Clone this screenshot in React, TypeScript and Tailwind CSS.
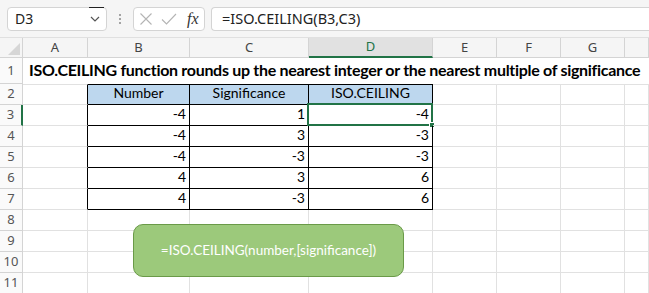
import React from 'react';

const COLS = [
  { key: 'A', w: 65 },
  { key: 'B', w: 102 },
  { key: 'C', w: 119 },
  { key: 'D', w: 124 },
  { key: 'E', w: 64 },
  { key: 'F', w: 64 },
  { key: 'G', w: 64 },
  { key: '', w: 24 },
];

const DATA: [string, string, string][] = [
  ['-4', '1', '-4'],
  ['-4', '3', '-3'],
  ['-4', '-3', '-3'],
  ['4', '3', '6'],
  ['4', '-3', '6'],
];

const cellFont = { fontFamily: 'Lato, "Open Sans", sans-serif' };
const uiFont = { fontFamily: '"Noto Sans", "Open Sans", sans-serif' };

function Toolbar() {
  return (
    <div className="flex h-[38px] items-center gap-[6px] bg-[#f5f5f5] pl-[7px] border-b border-[#e0e0e0]" style={uiFont}>
      {/* name box */}
      <div className="relative flex h-[24px] w-[100px] items-center justify-between rounded-[4px] border border-[#d4d4d4] bg-white pl-[7px] pr-[5px]">
        <span className="text-[14px] text-[#222]">D3</span>
        <svg width="12" height="8" viewBox="0 0 12 8">
          <path d="M2 2 L6 6 L10 2" fill="none" stroke="#555" strokeWidth="1.2" />
        </svg>
        <div className="absolute -top-[1px] right-[2px] h-[1px] w-[15px] bg-[#222]" />
      </div>
      {/* dots */}
      <div className="flex w-[14px] flex-col items-center gap-[2px]">
        <div className="h-[2px] w-[2px] rounded-full bg-[#888]" />
        <div className="h-[2px] w-[2px] rounded-full bg-[#888]" />
        <div className="h-[2px] w-[2px] rounded-full bg-[#888]" />
      </div>
      {/* function icons */}
      <div className="flex h-[24px] w-[72px] items-center rounded-[4px] border border-[#d4d4d4] bg-white pl-[5px]">
        <svg width="14" height="14" viewBox="0 0 14 14">
          <path d="M1.5 1.5 L12.5 12.5 M12.5 1.5 L1.5 12.5" stroke="#b4b4b4" strokeWidth="1.1" />
        </svg>
        <svg width="16" height="14" viewBox="0 0 16 14" className="ml-[8px]">
          <path d="M1 7.5 L5.5 12 L15 2" fill="none" stroke="#b4b4b4" strokeWidth="1.1" />
        </svg>
        <span className="ml-[10px] text-[16px] italic text-[#333]" style={{ fontFamily: '"Liberation Serif", serif' }}>
          fx
        </span>
      </div>
      {/* formula input */}
      <div className="flex h-[24px] flex-1 items-center rounded-l-[4px] border border-r-0 border-[#d4d4d4] bg-white pl-[10px]">
        <span className="text-[14.5px] text-[#222]">=ISO.CEILING(B3,C3)</span>
      </div>
    </div>
  );
}

function ColumnHeader() {
  return (
    <div className="flex h-[20px] bg-[#f5f5f5]" style={uiFont}>
      <div className="relative w-[23px] shrink-0 border-r border-b border-[#d4d4d4]">
        <svg width="14" height="14" viewBox="0 0 14 14" className="absolute left-[7px] top-[4px]">
          <path d="M13 1 L13 13 L1 13 Z" fill="#d6d6d6" />
        </svg>
      </div>
      {COLS.map((c) => {
        const sel = c.key === 'D';
        return (
          <div
            key={c.key + c.w}
            className={
              sel
                ? 'flex shrink-0 items-center justify-center border-r border-b-2 border-r-[#d4d4d4] border-b-[#217346] bg-[#e1e1e1] text-[13px] text-[#217346]'
                : 'flex shrink-0 items-center justify-center border-r border-b border-[#d4d4d4] text-[13px] text-[#444]'
            }
            style={{ width: c.w }}
          >
            {c.key}
          </div>
        );
      })}
    </div>
  );
}

function RowHead({ n, h }: { n: number; h: number }) {
  const sel = n === 3;
  return (
    <div
      className={
        sel
          ? 'flex w-[23px] shrink-0 items-center justify-center border-r-2 border-b border-r-[#217346] border-b-[#e1e1e1] bg-[#fafafa] text-[13px] text-[#555]'
          : 'flex w-[23px] shrink-0 items-center justify-center border-r border-b border-[#d4d4d4] bg-[#fafafa] text-[13px] text-[#555]'
      }
      style={{ height: h, ...uiFont }}
    >
      {n}
    </div>
  );
}

function Cell({
  w,
  cls,
  children,
  align = 'right',
}: {
  w: number;
  cls: string;
  children?: React.ReactNode;
  align?: 'right' | 'center';
}) {
  return (
    <div
      className={
        (align === 'center' ? 'justify-center ' : 'justify-end pr-[3px] ') +
        'relative flex h-[21px] shrink-0 items-end pb-[1px] text-[14px] text-black ' +
        cls
      }
      style={{ width: w, ...cellFont }}
    >
      {children}
    </div>
  );
}

const GRID = 'border-r border-b border-[#e1e1e1]';
const TBL = 'border-r border-b border-black';
const A_EDGE = 'border-r border-b border-r-black border-b-[#e1e1e1]';

export default function App() {
  return (
    <div className="relative h-[293px] w-[649px] overflow-hidden bg-white">
      <Toolbar />
      <ColumnHeader />

      {/* row 1 */}
      <div className="flex">
        <RowHead n={1} h={26} />
        <div
          className="flex h-[26px] flex-1 items-end whitespace-nowrap pb-[2px] pl-[6px] text-[16px] font-bold text-black"
          style={{ ...cellFont, letterSpacing: '-0.3px' }}
        >
          ISO.CEILING function rounds up the nearest integer or the nearest multiple of significance
        </div>
      </div>

      {/* row 2 header */}
      <div className="flex">
        <RowHead n={2} h={21} />
        <Cell w={65} cls="border-t border-t-[#e1e1e1] border-r border-b border-r-black border-b-[#e1e1e1]" />
        <Cell w={102} align="center" cls="border-t border-r border-b border-black bg-[#bdd7ee]">
          Number
        </Cell>
        <Cell w={119} align="center" cls="border-t border-r border-b border-black bg-[#bdd7ee]">
          Significance
        </Cell>
        <Cell w={124} align="center" cls="border-t border-r border-b border-black bg-[#bdd7ee]">
          ISO.CEILING
        </Cell>
        <Cell w={64} cls="border-t border-t-[#e1e1e1] border-r border-b border-[#e1e1e1]" />
        <Cell w={64} cls="border-t border-t-[#e1e1e1] border-r border-b border-[#e1e1e1]" />
        <Cell w={64} cls="border-t border-t-[#e1e1e1] border-r border-b border-[#e1e1e1]" />
        <Cell w={24} cls="border-t border-t-[#e1e1e1] border-r border-b border-[#e1e1e1]" />
      </div>

      {/* data rows */}
      {DATA.map((r, i) => (
        <div className="flex" key={i}>
          <RowHead n={i + 3} h={21} />
          <Cell w={65} cls={A_EDGE} />
          <Cell w={102} cls={TBL}>{r[0]}</Cell>
          <Cell w={119} cls={TBL}>{r[1]}</Cell>
          <Cell w={124} cls={TBL}>
            {r[2]}
            {i === 0 && (
              <>
                <div className="absolute -left-[2px] -top-[2px] -right-[1px] -bottom-[1px] border-2 border-[#217346]" />
                <div className="absolute -bottom-[3px] -right-[3px] h-[6px] w-[6px] border border-white bg-[#217346]" />
              </>
            )}
          </Cell>
          <Cell w={64} cls={GRID} />
          <Cell w={64} cls={GRID} />
          <Cell w={64} cls={GRID} />
          <Cell w={24} cls={GRID} />
        </div>
      ))}

      {/* empty rows */}
      {[8, 9, 10, 11].map((n) => (
        <div className="flex" key={n}>
          <RowHead n={n} h={21} />
          {COLS.map((c) => (
            <Cell key={c.key + c.w} w={c.w} cls={GRID} />
          ))}
        </div>
      ))}

      {/* syntax callout */}
      <div
        className="absolute left-[133px] top-[224px] flex h-[53px] w-[271px] items-center justify-center rounded-[10px] border-[1.5px] border-[#6a9a48] bg-[#9cc97b] text-[13.5px] text-white"
        style={cellFont}
      >
        =ISO.CEILING(number,[significance])
      </div>
    </div>
  );
}
